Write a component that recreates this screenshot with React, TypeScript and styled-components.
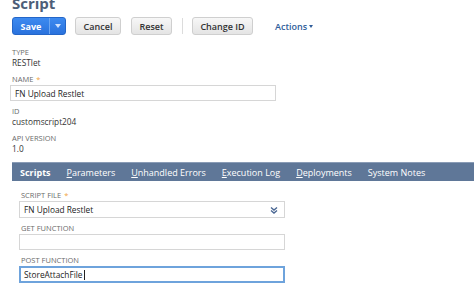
import React from 'react'
import styled, { createGlobalStyle } from 'styled-components'

const GlobalStyle = createGlobalStyle`
    body {
        margin: 0;
        background: #fff;
        font-family: "Open Sans", "Liberation Sans", sans-serif;
        color: #333;
    }
`

const Page = styled.div`
    padding: 0 0 0 10px;
    overflow: hidden;
    height: 287px;
`

const Title = styled.h1`
    margin: -3px 0 0 2px;
    height: 12px;
    line-height: 12px;
    font-size: 15px;
    font-weight: 700;
    color: #4d5e78;
`

const Toolbar = styled.div`
    display: flex;
    align-items: center;
    margin: 8px 0 0 2px;
    height: 18px;
`

const SplitButton = styled.div`
    display: flex;
    height: 18px;
    border-radius: 3px;
    overflow: hidden;
    background: linear-gradient(#3d8af0, #2a72dd);
    border: 1px solid #2466c8;
    box-sizing: border-box;
    margin-right: 9px;
`

const SaveLabel = styled.span`
    width: 36px;
    display: flex;
    align-items: center;
    justify-content: center;
    font-size: 9px;
    font-weight: 700;
    color: #fff;
`

const SaveArrow = styled.span`
    width: 15px;
    display: flex;
    align-items: center;
    justify-content: center;
    border-left: 1px solid #6da6f2;
    &::after {
        content: '';
        border-left: 3px solid transparent;
        border-right: 3px solid transparent;
        border-top: 4px solid #cfe2ff;
    }
`

const Button = styled.button<{ $w: number }>`
    width: ${p => p.$w}px;
    height: 18px;
    padding: 0;
    margin-right: 10px;
    border: 1px solid #cfcfcf;
    border-radius: 3px;
    background: linear-gradient(#f7f7f7, #e4e4e4);
    font-family: inherit;
    font-size: 9px;
    font-weight: 600;
    color: #333;
`

const Divider = styled.span`
    width: 1px;
    height: 16px;
    background: #dcdcdc;
    margin: 0 9px 0 0;
`

const Actions = styled.span`
    margin-left: 12px;
    font-size: 9px;
    font-weight: 600;
    color: #2f5d9a;
    display: flex;
    align-items: center;
    gap: 2px;
    &::after {
        content: '';
        border-left: 2.5px solid transparent;
        border-right: 2.5px solid transparent;
        border-top: 3px solid #2f5d9a;
        margin-top: 1px;
    }
`

const Fields = styled.div<{ $gap: number; $pad: number; $top: number }>`
    display: flex;
    flex-direction: column;
    gap: ${p => p.$gap}px;
    padding: ${p => p.$top}px 0 0 ${p => p.$pad}px;
`

const Field = styled.div`
    display: flex;
    flex-direction: column;
`

const Label = styled.div`
    height: 10px;
    line-height: 10px;
    font-size: 7.5px;
    text-transform: uppercase;
    color: #6b6b6b;
    padding-left: 2px;
`

const Star = styled.span`
    color: #f2a33a;
    margin-left: 3px;
`

const Value = styled.div`
    height: 12px;
    line-height: 12px;
    font-size: 8.3px;
    color: #333;
    padding-left: 2px;
`

const Input = styled.div<{ $w: number; $h: number; $focus?: boolean }>`
    width: ${p => p.$w}px;
    height: ${p => p.$h}px;
    box-sizing: border-box;
    margin-top: 1px;
    border: ${p => (p.$focus ? '2px solid #6ea3dc' : '1px solid #d6d6d6')};
    padding-left: ${p => (p.$focus ? 3 : 4)}px;
    display: flex;
    align-items: center;
    justify-content: space-between;
    font-size: 8.3px;
    color: #222;
    background: #fff;
`

const Caret = styled.span`
    width: 1px;
    height: 10px;
    background: #222;
    margin-left: 1px;
`

const TabBar = styled.div`
    display: flex;
    align-items: center;
    height: 19px;
    margin: 7px 0 0 2px;
    background: #5f7798;
    border-top: 1px solid #8a9cb6;
    box-sizing: border-box;
`

const Tab = styled.span<{ $active?: boolean }>`
    position: relative;
    padding: 0 8px;
    font-size: 9px;
    font-weight: ${p => (p.$active ? 700 : 400)};
    color: #fff;
    white-space: nowrap;
    & u {
        text-decoration-thickness: 1px;
        text-underline-offset: 1px;
    }
    ${p =>
        p.$active &&
        `&::after {
            content: '';
            position: absolute;
            left: 50%;
            bottom: -6px;
            margin-left: -4px;
            border-left: 4px solid transparent;
            border-right: 4px solid transparent;
            border-bottom: 4px solid #fff;
        }`}
`

const Chevrons = () => (
    <svg width="8" height="8" viewBox="0 0 8 8" style={{ marginRight: 6 }}>
        <path d="M1 1.5 L4 4 L7 1.5" stroke="#4a6793" strokeWidth="1.4" fill="none" />
        <path d="M1 4.5 L4 7 L7 4.5" stroke="#4a6793" strokeWidth="1.4" fill="none" />
    </svg>
)

const App: React.FC = () => {
    const tabs = [
        { key: 'S', rest: 'cripts', active: true },
        { key: 'P', rest: 'arameters' },
        { key: 'U', rest: 'nhandled Errors' },
        { key: 'E', rest: 'xecution Log' },
        { key: 'D', rest: 'eployments' },
        { key: '', rest: 'System Notes' },
    ]

    return <Page>
        <GlobalStyle />
        <Title>Script</Title>

        <Toolbar>
            <SplitButton>
                <SaveLabel>Save</SaveLabel>
                <SaveArrow />
            </SplitButton>
            <Button $w={46}>Cancel</Button>
            <Button $w={41}>Reset</Button>
            <Divider />
            <Button $w={61}>Change ID</Button>
            <Actions>Actions</Actions>
        </Toolbar>

        <Fields $gap={5} $pad={0} $top={12}>
            <Field>
                <Label>Type</Label>
                <Value>RESTlet</Value>
            </Field>
            <Field>
                <Label>Name<Star>*</Star></Label>
                <Input $w={266} $h={16}>FN Upload Restlet</Input>
            </Field>
            <Field>
                <Label>ID</Label>
                <Value>customscript204</Value>
            </Field>
            <Field>
                <Label>API Version</Label>
                <Value>1.0</Value>
            </Field>
        </Fields>

        <TabBar>
            {tabs.map(t => (
                <Tab key={t.rest} $active={t.active}>
                    {t.key && !t.active ? <u>{t.key}</u> : t.key}{t.rest}
                </Tab>
            ))}
        </TabBar>

        <Fields $gap={5} $pad={9} $top={9}>
            <Field>
                <Label>Script File<Star>*</Star></Label>
                <Input $w={266} $h={17}>FN Upload Restlet<Chevrons /></Input>
            </Field>
            <Field>
                <Label>Get Function</Label>
                <Input $w={266} $h={16} />
            </Field>
            <Field>
                <Label>Post Function</Label>
                <Input $w={266} $h={17} $focus>
                    <span style={{ display: 'flex', alignItems: 'center' }}>StoreAttachFile<Caret /></span>
                </Input>
            </Field>
        </Fields>
    </Page>
}

export default App
